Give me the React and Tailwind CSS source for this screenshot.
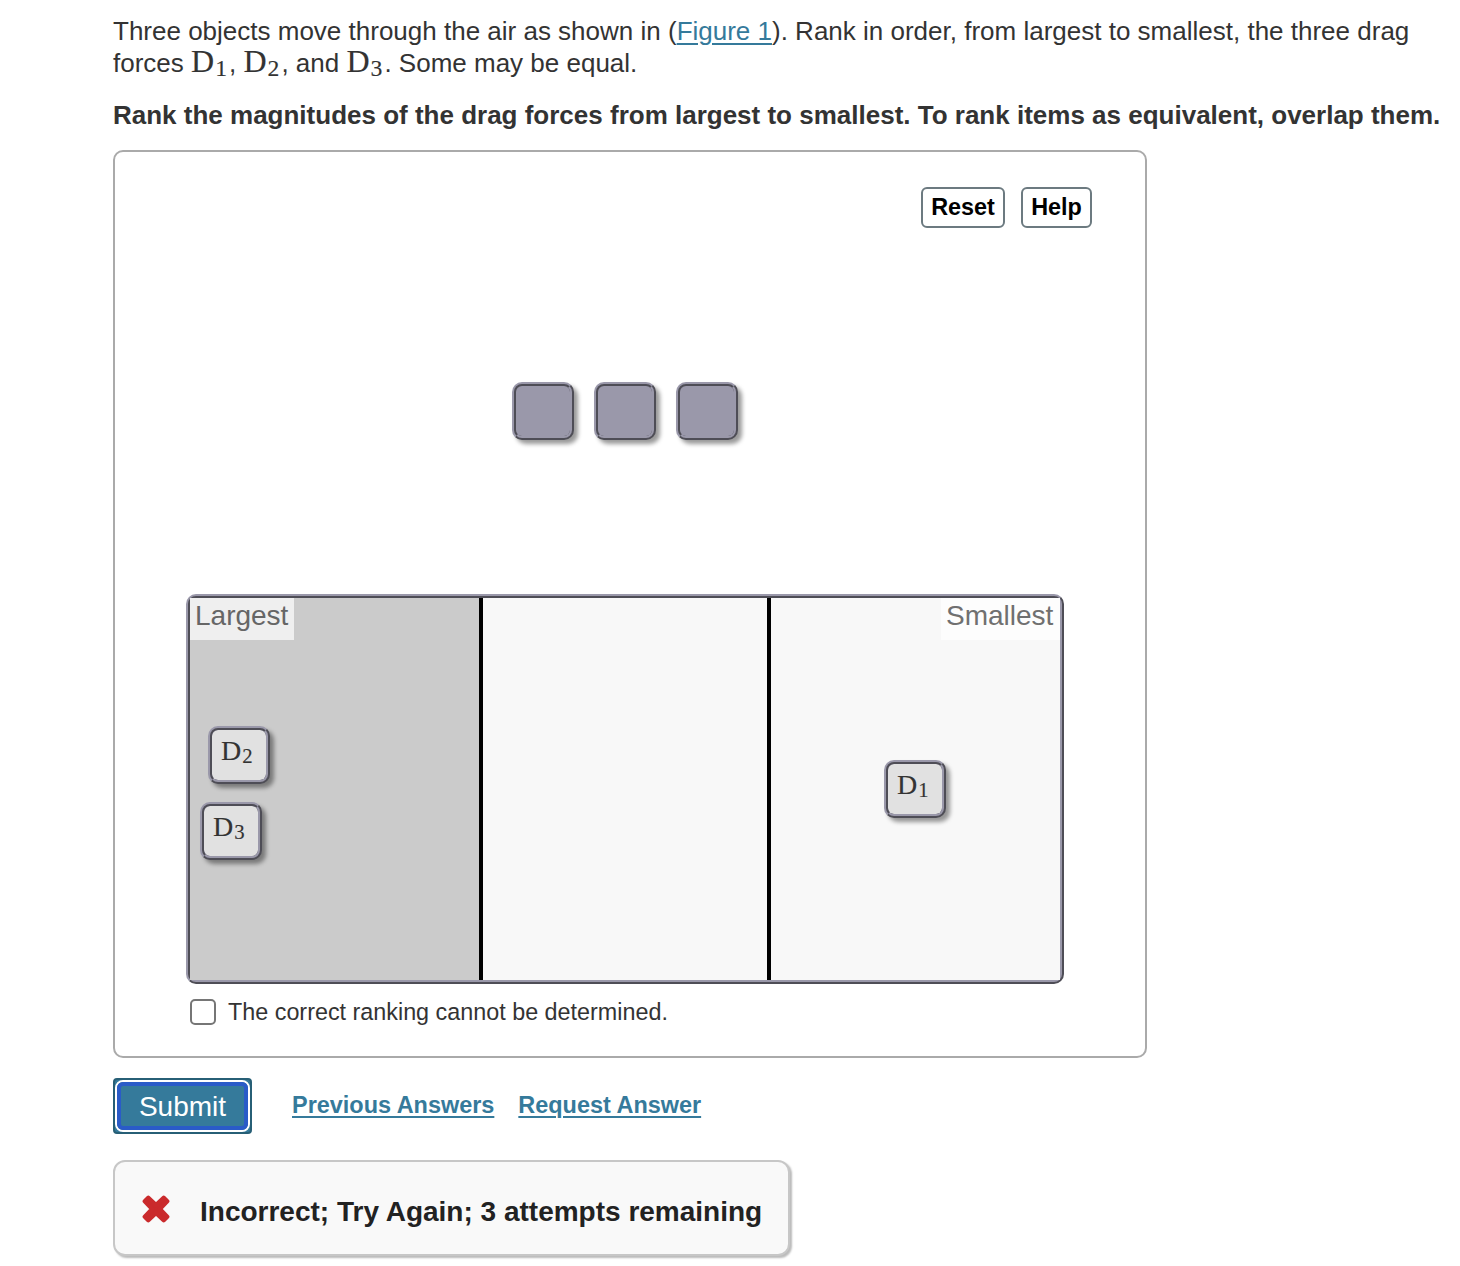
import React from "react";

function MathD({ n, className = "" }) {
  return (
    <span
      className={
        "whitespace-nowrap font-['Liberation_Serif',serif] leading-[0px] [-webkit-text-stroke:0.15px_#333] " + className
      }
    >
      D<span className="relative top-[0.16em] ml-px text-[0.74em]">{n}</span>
    </span>
  );
}

const tileBase =
  "h-[58px] w-[62px] rounded-[10px] border-4 [border-style:ridge] border-[#9a98aa] shadow-[4px_4px_4px_rgba(0,0,0,0.4)]";

function Tile({ n, className }) {
  return (
    <div className={tileBase + " absolute bg-[#e1e1e1] pl-[9px] pt-[5px] leading-8 text-[#333] " + className}>
      <MathD n={n} className="text-[28px]" />
    </div>
  );
}

const link =
  "mb-0.5 text-[23.45px] leading-8 font-bold text-[#357a9b] underline decoration-2 underline-offset-[3px]";

export default function App() {
  return (
    <div className="h-[1266px] w-[1460px] overflow-hidden bg-white pl-[113px] font-['Liberation_Sans',Arial,sans-serif] text-[#333]">
      <div className="pt-[15px] text-[26px] leading-8 whitespace-nowrap">
        <p>
          Three objects move through the air as shown in (
          <a className="text-[#357a9b] underline underline-offset-[3px] decoration-2">Figure 1</a>
          ). Rank in order, from largest to smallest, the three drag
        </p>
        <p className="h-8">
          forces <MathD n="1" className="mr-0.5 text-[32px]" />, <MathD n="2" className="mr-0.5 text-[32px]" />, and{" "}
          <MathD n="3" className="mr-0.5 text-[32px]" />. Some may be equal.
        </p>
      </div>
      <p className="mt-5 text-[26px] font-bold leading-8 whitespace-nowrap">
        Rank the magnitudes of the drag forces from largest to smallest. To rank items as equivalent, overlap them.
      </p>
      <section className="mt-[19px] flex h-[908px] w-[1034px] flex-col rounded-[10px] border-2 border-[#aaa]">
        <div className="mt-[35px] mr-[53px] flex justify-end gap-4 text-[23.4px] font-bold leading-[37px] text-black">
          <button className="h-[41px] w-[84px] rounded-md border-2 border-[#6c7a80]">Reset</button>
          <button className="h-[41px] w-[71px] rounded-md border-2 border-[#6c7a80]">Help</button>
        </div>
        <div className="mt-[154px] ml-[397px] flex gap-5">
          <div className={tileBase + " bg-[#9a98aa]"} />
          <div className={tileBase + " bg-[#9a98aa]"} />
          <div className={tileBase + " bg-[#9a98aa]"} />
        </div>
        <div className="relative mt-[154px] ml-[71px] flex h-[390px] w-[878px] rounded-[10px] border-4 border-[#9a98aa] [border-style:ridge] text-[28px] leading-8">
          <div className="w-[289px] bg-[#cbcbcb]">
            <div className="h-[42px] w-[104px] bg-[#efefef] pl-[5px] pt-0.5 text-[#666]">Largest</div>
          </div>
          <div className="w-[292px] border-x-4 border-black bg-[#f8f8f8]" />
          <div className="flex flex-1 justify-end bg-[#f8f8f8]">
            <div className="h-[42px] w-[119px] bg-[#fdfdfd] pl-[5px] pt-0.5 text-[#707070]">Smallest</div>
          </div>
          <Tile n="2" className="left-[18px] top-[128px]" />
          <Tile n="3" className="left-[10px] top-[204px]" />
          <Tile n="1" className="left-[694px] top-[162px]" />
        </div>
        <label className="mt-[15px] ml-[75px] flex items-center gap-3 text-[23.35px] leading-[26px]">
          <span className="size-[26px] rounded-[5px] border-2 border-[#767676]" />
          The correct ranking cannot be determined.
        </label>
      </section>
      <div className="mt-5 flex h-14 items-center">
        <button className="h-14 w-[139px] rounded-[4px] border-2 border-[#275f76] bg-[#357a9b]">
          <span className="flex h-full w-full rounded-[8px] border-2 border-white">
            <span className="flex h-full w-full items-center justify-center rounded-md border-4 border-[#2a5bc8] pt-0.5 text-[28px] leading-8 text-white">
              Submit
            </span>
          </span>
        </button>
        <a className={link + " ml-10"}>Previous Answers</a>
        <a className={link + " ml-6"}>Request Answer</a>
      </div>
      <div className="mt-[26px] flex h-[96px] w-[677px] items-center rounded-[12px] border-2 border-[#c7c7c7] bg-[#f9f9f9] pl-[27px] shadow-[2px_2px_2px_#bbb]">
        <svg className="mt-0.5 size-[28px]" viewBox="0 0 28 28">
          <path
            d="M6.3 2.8L14 10.2L21.7 2.8L25.2 6.3L17.8 14L25.2 21.7L21.7 25.2L14 17.8L6.3 25.2L2.8 21.7L10.2 14L2.8 6.3Z"
            fill="#ca2a2c"
            stroke="#ca2a2c"
            strokeWidth="4.4"
            strokeLinejoin="round"
          />
        </svg>
        <span className="ml-[30px] mt-[7px] text-[28px] leading-8 font-bold text-[#222]">
          Incorrect; Try Again; 3 attempts remaining
        </span>
      </div>
    </div>
  );
}
